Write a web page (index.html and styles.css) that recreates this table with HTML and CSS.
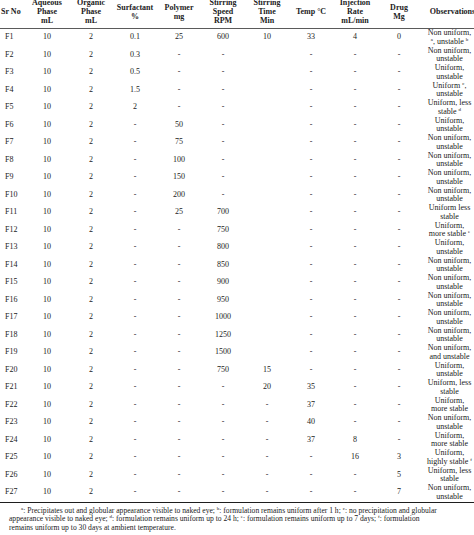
FILE: index.html
```html
<!DOCTYPE html>
<html>
<head>
<meta charset="utf-8">
<link rel="stylesheet" href="styles.css">
</head>
<body>
<div class="page">
<table class="data">
<colgroup>
<col class="c-sr"><col class="c-num"><col class="c-num"><col class="c-num"><col class="c-num"><col class="c-num"><col class="c-num"><col class="c-num"><col class="c-num"><col class="c-num"><col class="c-obs">
</colgroup>
<thead>
<tr>
<th class="sr">Sr No</th>
<th>Aqueous<br>Phase<br>mL</th>
<th>Organic<br>Phase<br>mL</th>
<th>Surfactant<br>%</th>
<th>Polymer<br>mg</th>
<th>Stirring<br>Speed<br>RPM</th>
<th>Stirring<br>Time<br>Min</th>
<th>Temp °C</th>
<th>Injection<br>Rate<br>mL/min</th>
<th>Drug<br>Mg</th>
<th class="obs">Observations</th>
</tr>
</thead>
<tbody>
<tr><td class="sr">F1</td><td>10</td><td>2</td><td>0.1</td><td>25</td><td>600</td><td>10</td><td>33</td><td>4</td><td>0</td><td class="obs">Non uniform,<br><sup>a</sup>, unstable <sup>b</sup></td></tr>
<tr><td class="sr">F2</td><td>10</td><td>2</td><td>0.3</td><td>-</td><td>-</td><td></td><td>-</td><td>-</td><td>-</td><td class="obs">Non uniform,<br>unstable</td></tr>
<tr><td class="sr">F3</td><td>10</td><td>2</td><td>0.5</td><td>-</td><td>-</td><td></td><td>-</td><td>-</td><td>-</td><td class="obs">Uniform,<br>unstable</td></tr>
<tr><td class="sr">F4</td><td>10</td><td>2</td><td>1.5</td><td>-</td><td>-</td><td></td><td>-</td><td>-</td><td>-</td><td class="obs">Uniform <sup>c</sup>,<br>unstable</td></tr>
<tr><td class="sr">F5</td><td>10</td><td>2</td><td>2</td><td>-</td><td>-</td><td></td><td>-</td><td>-</td><td>-</td><td class="obs">Uniform, less<br>stable <sup>d</sup></td></tr>
<tr><td class="sr">F6</td><td>10</td><td>2</td><td>-</td><td>50</td><td>-</td><td></td><td>-</td><td>-</td><td>-</td><td class="obs">Uniform,<br>unstable</td></tr>
<tr><td class="sr">F7</td><td>10</td><td>2</td><td>-</td><td>75</td><td>-</td><td></td><td>-</td><td>-</td><td>-</td><td class="obs">Non uniform,<br>unstable</td></tr>
<tr><td class="sr">F8</td><td>10</td><td>2</td><td>-</td><td>100</td><td>-</td><td></td><td>-</td><td>-</td><td>-</td><td class="obs">Non uniform,<br>unstable</td></tr>
<tr><td class="sr">F9</td><td>10</td><td>2</td><td>-</td><td>150</td><td>-</td><td></td><td>-</td><td>-</td><td>-</td><td class="obs">Non uniform,<br>unstable</td></tr>
<tr><td class="sr">F10</td><td>10</td><td>2</td><td>-</td><td>200</td><td>-</td><td></td><td>-</td><td>-</td><td>-</td><td class="obs">Non uniform,<br>unstable</td></tr>
<tr><td class="sr">F11</td><td>10</td><td>2</td><td>-</td><td>25</td><td>700</td><td></td><td>-</td><td>-</td><td>-</td><td class="obs">Uniform less<br>stable</td></tr>
<tr><td class="sr">F12</td><td>10</td><td>2</td><td>-</td><td>-</td><td>750</td><td></td><td>-</td><td>-</td><td>-</td><td class="obs">Uniform,<br>more stable <sup>e</sup></td></tr>
<tr><td class="sr">F13</td><td>10</td><td>2</td><td>-</td><td>-</td><td>800</td><td></td><td>-</td><td>-</td><td>-</td><td class="obs">Uniform,<br>unstable</td></tr>
<tr><td class="sr">F14</td><td>10</td><td>2</td><td>-</td><td>-</td><td>850</td><td></td><td>-</td><td>-</td><td>-</td><td class="obs">Non uniform,<br>unstable</td></tr>
<tr><td class="sr">F15</td><td>10</td><td>2</td><td>-</td><td>-</td><td>900</td><td></td><td>-</td><td>-</td><td>-</td><td class="obs">Non uniform,<br>unstable</td></tr>
<tr><td class="sr">F16</td><td>10</td><td>2</td><td>-</td><td>-</td><td>950</td><td></td><td>-</td><td>-</td><td>-</td><td class="obs">Non uniform,<br>unstable</td></tr>
<tr><td class="sr">F17</td><td>10</td><td>2</td><td>-</td><td>-</td><td>1000</td><td></td><td>-</td><td>-</td><td>-</td><td class="obs">Non uniform,<br>unstable</td></tr>
<tr><td class="sr">F18</td><td>10</td><td>2</td><td>-</td><td>-</td><td>1250</td><td></td><td>-</td><td>-</td><td>-</td><td class="obs">Non uniform,<br>unstable</td></tr>
<tr><td class="sr">F19</td><td>10</td><td>2</td><td>-</td><td>-</td><td>1500</td><td></td><td>-</td><td>-</td><td>-</td><td class="obs">Non uniform,<br>and unstable</td></tr>
<tr><td class="sr">F20</td><td>10</td><td>2</td><td>-</td><td>-</td><td>750</td><td>15</td><td>-</td><td>-</td><td>-</td><td class="obs">Uniform,<br>unstable</td></tr>
<tr><td class="sr">F21</td><td>10</td><td>2</td><td>-</td><td>-</td><td>-</td><td>20</td><td>35</td><td>-</td><td>-</td><td class="obs">Uniform, less<br>stable</td></tr>
<tr><td class="sr">F22</td><td>10</td><td>2</td><td>-</td><td>-</td><td>-</td><td>-</td><td>37</td><td>-</td><td>-</td><td class="obs">Uniform,<br>more stable</td></tr>
<tr><td class="sr">F23</td><td>10</td><td>2</td><td>-</td><td>-</td><td>-</td><td>-</td><td>40</td><td>-</td><td>-</td><td class="obs">Non uniform,<br>unstable</td></tr>
<tr><td class="sr">F24</td><td>10</td><td>2</td><td>-</td><td>-</td><td>-</td><td>-</td><td>37</td><td>8</td><td>-</td><td class="obs">Uniform,<br>more stable</td></tr>
<tr><td class="sr">F25</td><td>10</td><td>2</td><td>-</td><td>-</td><td>-</td><td>-</td><td>-</td><td>16</td><td>3</td><td class="obs">Uniform,<br>highly stable <sup>f</sup></td></tr>
<tr><td class="sr">F26</td><td>10</td><td>2</td><td>-</td><td>-</td><td>-</td><td>-</td><td>-</td><td>-</td><td>5</td><td class="obs">Uniform, less<br>stable</td></tr>
<tr><td class="sr">F27</td><td>10</td><td>2</td><td>-</td><td>-</td><td>-</td><td>-</td><td>-</td><td>-</td><td>7</td><td class="obs">Non uniform,<br>unstable</td></tr>
</tbody>
</table>
<p class="notes"><sup>a</sup>: Precipitates out and globular appearance visible to naked eye; <sup>b</sup>: formulation remains uniform after 1 h; <sup>c</sup>: no precipitation and globular<br>appearance visible to naked eye; <sup>d</sup>: formulation remains uniform up to 24 h; <sup>e</sup>: formulation remains uniform up to 7 days; <sup>f</sup>: formulation<br>remains uniform up to 30 days at ambient temperature.</p>
</div>
</body>
</html>
```
FILE: styles.css
```css
html, body {
  margin: 0;
  padding: 0;
  background: #ffffff;
}
body {
  width: 474px;
  height: 535px;
  overflow: hidden;
  font-family: "Liberation Serif", "Times New Roman", serif;
  color: #222222;
}
.page {
  width: 484px;
  margin-top: -2px;
}
.data {
  table-layout: fixed;
  width: 484px;
  border-collapse: collapse;
  font-size: 8px;
}
.c-sr { width: 25px; }
.c-num { width: 44px; }
.c-obs { width: 63px; }
.data th {
  font-weight: bold;
  line-height: 9px;
  padding: 0 0 3px;
  text-align: center;
  vertical-align: middle;
  border-bottom: 1px solid #5a5a5a;
}
.data th.sr {
  text-align: left;
  padding-left: 1px;
}
.data td {
  line-height: 8.75px;
  padding: 0;
  text-align: center;
  vertical-align: middle;
  white-space: nowrap;
}
.data td.sr {
  text-align: left;
  padding-left: 5px;
}
.data td.obs {
  padding-right: 6px;
}
.data tbody tr:last-child td {
  border-bottom: 1.5px solid #1e1e1e;
}
.data sup,
.notes sup {
  font-size: 5px;
  line-height: 0;
  vertical-align: 3px;
}
.notes {
  margin: 4px 0 0;
  padding-left: 9px;
  text-indent: 12px;
  font-size: 7.6px;
  line-height: 8.7px;
  white-space: nowrap;
}
```
